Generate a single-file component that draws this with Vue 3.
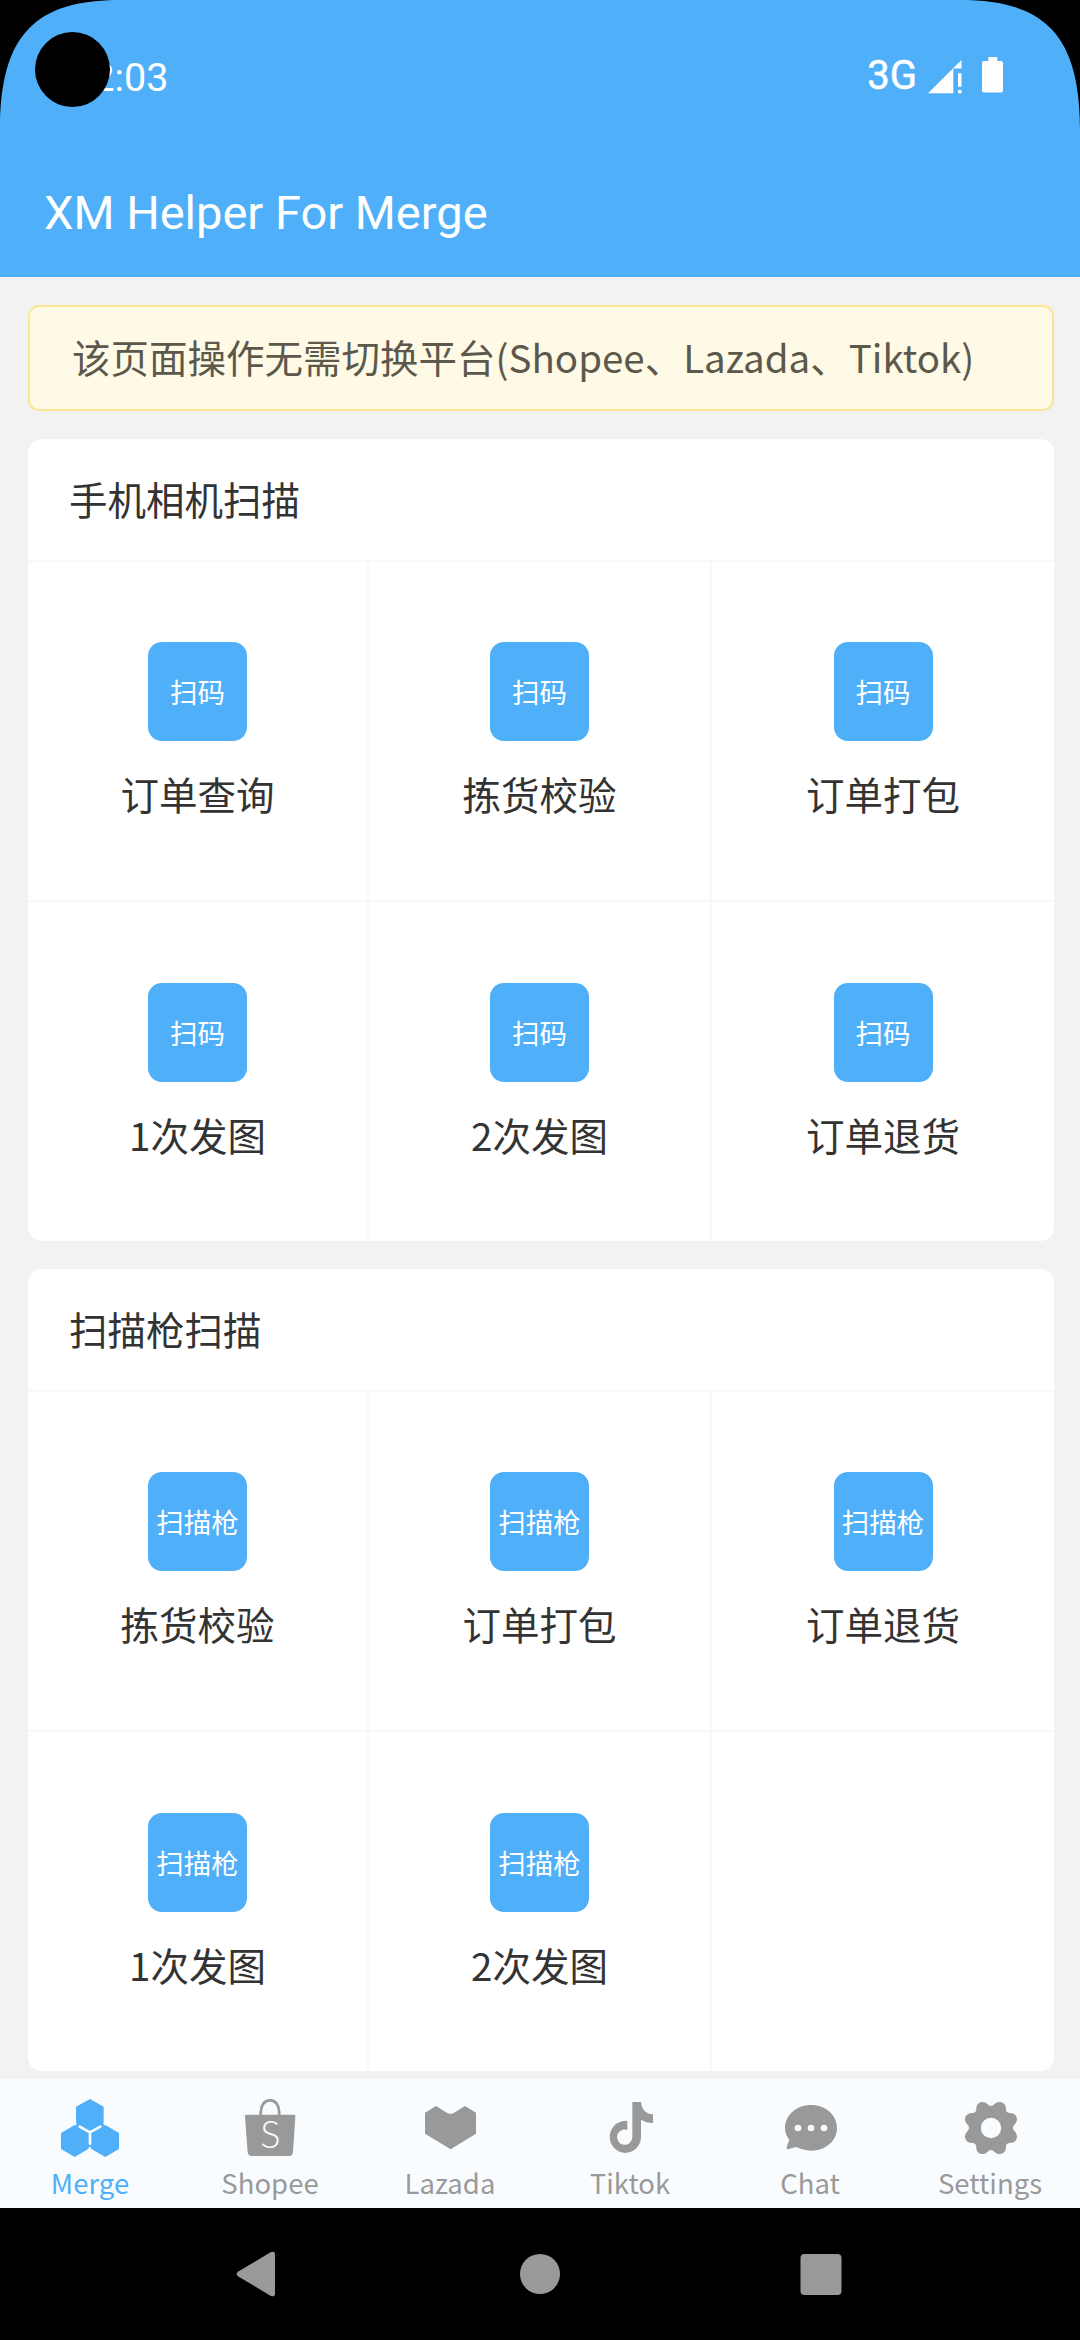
<script setup>
const sections = [
  {
    title: '手机相机扫描',
    badge: '扫码',
    items: ['订单查询', '拣货校验', '订单打包', '1次发图', '2次发图', '订单退货'],
  },
  {
    title: '扫描枪扫描',
    badge: '扫描枪',
    items: ['拣货校验', '订单打包', '订单退货', '1次发图', '2次发图', ''],
  },
]
</script>

<template>
  <div class="screen">
    <header class="header">
      <div class="status">
        <span class="time">12:03</span>
        <div class="indicators">
          <span class="network">3G</span>
          <svg class="signal" viewBox="0 0 34 34">
            <path d="M0 33.3 33.5 0V8.5H25.3V33.3Z" />
            <path d="M30 13.3h3.5v13.5H30zM30 30h3.5v3.3H30z" />
          </svg>
          <svg class="battery" viewBox="0 0 21 36">
            <path d="M6.3 0h9v4H19a2 2 0 0 1 2 2v27.5a2 2 0 0 1-2 2H2a2 2 0 0 1-2-2V6a2 2 0 0 1 2-2h4.300z" />
          </svg>
        </div>
      </div>
      <h1 class="title">XM Helper For Merge</h1>
      <svg class="corner left" viewBox="0 0 120 130"><path d="M0 0H120C35 0 0 35 0 130Z" /></svg>
      <svg class="corner right" viewBox="0 0 120 130"><path d="M0 0H120C35 0 0 35 0 130Z" /></svg>
      <i class="camera"></i>
    </header>

    <main class="content">
      <p class="notice">该页面操作无需切换平台(Shopee、Lazada、Tiktok)</p>
      <section v-for="section in sections" :key="section.title" class="card">
        <h2 class="card-title">{{ section.title }}</h2>
        <div class="grid">
          <div v-for="(item, i) in section.items" :key="i" class="cell">
            <template v-if="item">
              <span class="badge">{{ section.badge }}</span>
              <span class="label">{{ item }}</span>
            </template>
          </div>
        </div>
      </section>
    </main>

    <nav class="tabs">
      <a class="tab active">
        <svg viewBox="180 114 180 180">
          <path d="M270 117 311 140V188L270 211 228 188V140Z" />
          <path d="M224 195 266 219V266L224 291 183 267V219Z" />
          <path d="M316 195 357 219V267L316 291 273 266V219Z" />
          <path d="M230 191 270 214 310 191M270 214V262" fill="none" stroke="currentColor" stroke-width="14" />
          <path d="M239 200 270 217 301 200M270 217V251" fill="none" stroke="#f9fcff" stroke-width="8" stroke-linecap="round" />
        </svg>
        <span>Merge</span>
      </a>
      <a class="tab">
        <svg viewBox="720 114 180 180">
          <path d="M738 164H882Q887 164 886 170L879 277Q878 288 867 288H756Q744 288 743 277L735 170Q734 164 738 164Z" />
          <path d="M782 167C782 137 792 121 810 121S838 137 838 167" fill="none" stroke="currentColor" stroke-width="8" />
          <text x="811" y="263" class="bag-letter">S</text>
        </svg>
        <span>Shopee</span>
      </a>
      <a class="tab">
        <svg viewBox="180 114 180 180">
          <path d="M195 158 228 138 258 157Q272 166 285 157L315 138 348 158V221L272 268 195 221Z" />
        </svg>
        <span>Lazada</span>
      </a>
      <a class="tab">
        <svg viewBox="720 114 180 180">
          <path d="M817 126H843C844 148 859 163 879 163V189C865 189 853 185 843 179V234A47 48 0 1 1 802 183V210A23 23 0 1 0 817 232Z" />
        </svg>
        <span>Tiktok</span>
      </a>
      <a class="tab">
        <svg viewBox="180 114 180 180">
          <path d="M273 135C318 135 351 166 351 204S318 272 273 272C257 272 242 267 229 261L206 267Q197 269 200 261L208 239C200 230 195 218 195 204 195 166 229 135 273 135Z" />
          <g fill="#f9fcff"><circle cx="234" cy="204" r="10" /><circle cx="273" cy="204" r="10" /><circle cx="312" cy="204" r="10" /></g>
        </svg>
        <span>Chat</span>
      </a>
      <a class="tab">
        <svg viewBox="720 114 180 180">
          <path fill-rule="evenodd" d="M803 133Q813 143 823 133C835 120 858 125 858 147Q857 159 870 159C891 159 897 181 884 193Q874 204 884 214C897 228 891 249 870 249Q857 249 858 262C858 283 835 288 823 275Q813 265 803 275C791 288 768 283 769 262Q769 249 756 249C735 249 729 228 742 214Q752 204 742 193C729 181 735 159 756 159Q769 159 769 147C768 125 791 120 803 133ZM813 173.500A30.500 30.500 0 1 0 813 234.500A30.500 30.500 0 1 0 813 173.500Z" />
        </svg>
        <span>Settings</span>
      </a>
    </nav>

    <footer class="system">
      <svg viewBox="0 0 46 46"><path d="M2.300 20.500 34.500 1.300Q39 -.5 39 3.500V42.500Q39 46.500 34.500 44.700L2.300 25.500Q-1.200 23 2.300 20.500Z" /></svg>
      <svg viewBox="0 0 46 46"><circle cx="23" cy="23" r="20" /></svg>
      <svg viewBox="0 0 46 46"><rect x="2.500" y="3" width="41" height="41" rx="4" /></svg>
    </footer>
  </div>
</template>

<style>
body {
  margin: 0;
}
</style>

<style scoped>
.screen {
  width: 1080px;
  height: 2340px;
  display: flex;
  flex-direction: column;
  overflow: hidden;
  background: #f2f2f2;
  color: #333;
  font-family: "Noto Sans CJK SC", "Noto Sans", sans-serif;
}
.header {
  position: relative;
  flex: none;
  height: 277px;
  background: #4fb0f9;
  color: #fff;
  font-family: Roboto, sans-serif;
}
.status {
  display: flex;
  justify-content: space-between;
  align-items: center;
  height: 154px;
  box-sizing: border-box;
  padding: 0 77px 0 70px;
}
.time {
  margin-top: 1px;
  font-size: 39.500px;
}
.indicators {
  display: flex;
  align-items: center;
}
.network {
  font-size: 40px;
  line-height: 46px;
  font-weight: 400;
  -webkit-text-stroke: 0.5px #fff;
  margin-right: 11px;
  margin-top: -2px;
}
.signal {
  width: 34px;
  height: 34px;
  margin-right: 20px;
  margin-top: -1px;
  fill: #fff;
}
.battery {
  width: 21px;
  height: 36px;
  margin-top: -4px;
  fill: #fff;
}
.title {
  margin: 0;
  padding: 28px 0 0 44px;
  font-size: 47px;
  line-height: 62px;
  font-weight: 400;
}
.corner {
  position: absolute;
  top: 0;
  width: 120px;
  height: 130px;
}
.left {
  left: 0;
}
.right {
  right: 0;
  transform: scaleX(-1);
}
.camera {
  position: absolute;
  left: 35px;
  top: 32px;
  width: 75px;
  height: 75px;
  border-radius: 50%;
  background: #000;
}
.content {
  flex: none;
  height: 1802px;
  box-sizing: border-box;
  padding: 28px 26px 0 28px;
  display: flex;
  flex-direction: column;
  gap: 28px;
}
.notice {
  margin: 0;
  height: 106px;
  box-sizing: border-box;
  padding-left: 42px;
  border: 2px solid #fbe594;
  border-radius: 11px;
  background: #fffae6;
  color: #5c594c;
  font-size: 38.500px;
  line-height: 98px;
  white-space: nowrap;
}
.card {
  height: 802px;
  border-radius: 14px;
  background: #fff;
  overflow: hidden;
}
.card-title {
  margin: 0;
  height: 121px;
  padding-left: 41px;
  border-bottom: 2px solid #f8f8f8;
  font-size: 38.500px;
  line-height: 119px;
  font-weight: 400;
}
.grid {
  display: grid;
  grid-template-columns: 341px 343px 342px;
  grid-template-rows: 340px 339px;
}
.cell {
  display: flex;
  flex-direction: column;
  align-items: center;
  box-sizing: border-box;
  padding-top: 80px;
  border-right: 2px solid #f8f8f8;
}
.cell:nth-child(3n) {
  border-right: 0;
}
.cell:nth-child(-n + 3) {
  border-bottom: 2px solid #f8f8f8;
}
.cell:nth-child(n + 4) {
  padding-top: 81px;
}
.badge {
  width: 99px;
  height: 99px;
  border-radius: 14px;
  background: #4fb0f9;
  color: #fff;
  font-size: 27.500px;
  line-height: 99px;
  text-align: center;
}
.label {
  margin-top: 24px;
  font-size: 38.500px;
  line-height: 56px;
}
.tabs {
  flex: none;
  display: flex;
  height: 129px;
  background: #f9fcff;
}
.tab {
  width: 180px;
  display: flex;
  flex-direction: column;
  align-items: center;
  padding-top: 19px;
  box-sizing: border-box;
  color: #999;
  font-size: 27.500px;
  line-height: 40px;
}
.tab svg {
  width: 60px;
  height: 60px;
  margin-bottom: 4px;
  fill: currentColor;
}
.active {
  color: #4fb0f9;
}
.bag-letter {
  fill: #f9fcff;
  font: 300 114px Lato, sans-serif;
  text-anchor: middle;
}
.system {
  flex: none;
  display: flex;
  justify-content: center;
  align-items: center;
  gap: 235px;
  height: 132px;
  background: #000;
}
.system svg {
  width: 46px;
  height: 46px;
  overflow: visible;
  fill: #999;
}
</style>
